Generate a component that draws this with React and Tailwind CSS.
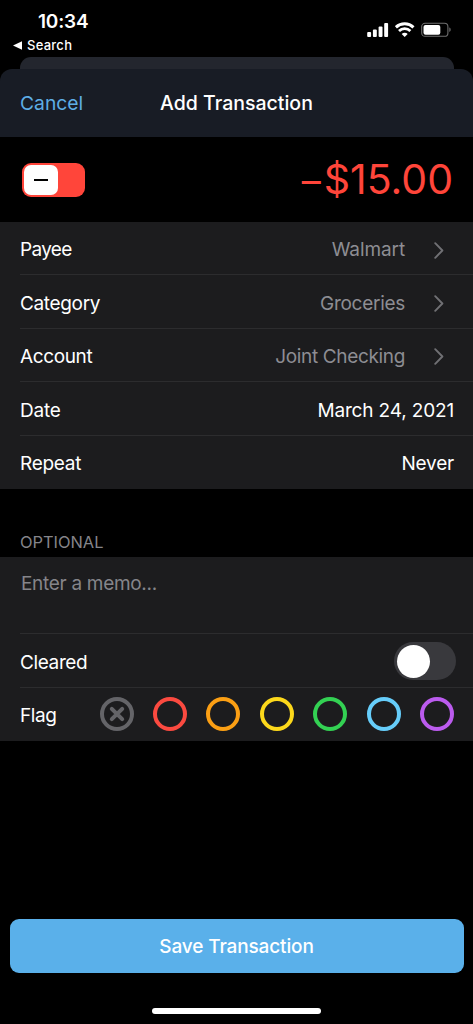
import { useState } from 'react';

const details = [
  { label: 'Payee', value: 'Walmart', link: true, labelClass: 'tracking-[-0.035em]', valueClass: 'tracking-[-0.005em]' },
  { label: 'Category', value: 'Groceries', link: true, labelClass: 'tracking-[-0.018em]', valueClass: 'tracking-[-0.015em]' },
  { label: 'Account', value: 'Joint Checking', link: true, labelClass: 'tracking-[-0.02em]', valueClass: 'tracking-[-0.018em]' },
  { label: 'Date', value: 'March 24, 2021', labelClass: 'tracking-[-0.01em]', valueClass: 'tracking-[-0.008em]' },
  { label: 'Repeat', value: 'Never', labelClass: 'tracking-[-0.015em]', valueClass: 'tracking-[-0.01em]' },
];

const flags = [
  { name: 'Red', border: 'border-[#fb4a40]' },
  { name: 'Orange', border: 'border-[#fb9f14]' },
  { name: 'Yellow', border: 'border-[#fcd81b]' },
  { name: 'Green', border: 'border-[#33d153]' },
  { name: 'Blue', border: 'border-[#66cdfa]' },
  { name: 'Purple', border: 'border-[#bb5bee]' },
];

const StatusBar = () => (
  <div className="flex h-[57px] shrink-0 justify-between">
    <div className="pl-[13px] pt-[11px]">
      <div className="pl-[25px] text-[19px] font-semibold leading-[22px] tracking-[-0.01em]">10:34</div>
      <div className="mt-[4px] flex items-center gap-[5px] text-[13px] font-medium leading-[16px] tracking-[0.02em]">
        <svg width="9" height="9" viewBox="0 0 9 9" fill="currentColor">
          <path d="M0 4.5 9 0.3v8.4z" />
        </svg>
        Search
      </div>
    </div>
    <div className="flex items-start gap-[6px] pr-[21px] pt-[22px]">
      <svg width="22" height="16" viewBox="0 0 22 16" fill="currentColor">
        <rect x="0.2" y="10" width="3.9" height="5" rx="1" />
        <rect x="5.9" y="7.4" width="3.9" height="7.6" rx="1" />
        <rect x="11.6" y="4.4" width="3.9" height="10.6" rx="1" />
        <rect x="17.2" y="1" width="3.9" height="14" rx="1" />
      </svg>
      <svg width="20" height="16" viewBox="0 0 20 16" fill="none" stroke="currentColor">
        <path d="M0.9 5.3a12.9 12.9 0 0 1 17.6 0" strokeWidth="3" />
        <path d="M4 9a8.2 8.2 0 0 1 11.4 0" strokeWidth="2.8" />
        <path d="M9.7 15 6.7 12a4 4 0 0 1 6 0z" fill="currentColor" stroke="none" />
      </svg>
      <svg width="31" height="16" viewBox="0 0 31 16" fill="none">
        <rect x="0.7" y="1.3" width="26.2" height="13" rx="3.4" stroke="#6f6f6f" strokeWidth="1.1" />
        <rect x="2.5" y="3" width="16.8" height="9.7" rx="2" fill="#fff" />
        <path d="M28.4 5.6c1.6.6 1.6 3.8 0 4.4z" fill="#7b7b7b" />
      </svg>
    </div>
  </div>
);

const Row = ({ label, labelClass = 'tracking-[-0.02em]', children, last }) => (
  <div className="flex h-[53.4px] pl-5">
    <div className={`flex flex-1 items-center justify-between pr-[19px] ${last ? 'pb-px' : 'border-b border-[#2c2c2e]'}`}>
      <span className={`text-[19px] ${last ? 'pt-[4px]' : 'pt-[5px]'} ${labelClass}`}>{label}</span>
      {children}
    </div>
  </div>
);

const Chevron = () => (
  <svg className="ml-[29px] mr-[10px]" width="10" height="17" viewBox="0 0 10 17" fill="none" stroke="#707074" strokeWidth="1.9">
    <path d="M1.2 1.2 8.4 8.5 1.2 15.8" strokeLinecap="round" strokeLinejoin="round" />
  </svg>
);

const App = () => {
  const [cleared, setCleared] = useState(false);
  const [expense, setExpense] = useState(true);

  return (
    <div className="flex h-[1024px] w-[473px] flex-col overflow-hidden bg-black font-['Inter',sans-serif] text-white">
      <StatusBar />

      {/* Edge of the screen behind the sheet */}
      <div className="mx-[19.5px] h-3 shrink-0 rounded-t-[11px] bg-[#23262e]" />

      <header className="grid h-[68px] shrink-0 grid-cols-[1fr_auto_1fr] items-center rounded-t-[12px] bg-[#181c25] px-5 pt-[2px]">
        <button className="pb-[2px] text-left text-[19.3px] text-[#5eaee6]">Cancel</button>
        <h1 className="text-[19.5px] font-medium">Add Transaction</h1>
      </header>

      <div className="flex h-[85px] shrink-0 items-center justify-between pl-[22px] pr-5">
        <button
          className={`flex h-[34px] w-[63px] items-center rounded-[9px] p-[2px] ${expense ? 'bg-[#ff453a]' : 'justify-end bg-[#30d158]'}`}
          onClick={() => setExpense(!expense)}
          aria-label="Toggle inflow or outflow"
        >
          <span className="flex h-[30px] w-[34px] items-center justify-center rounded-[7px] bg-white">
            <span className="h-[2px] w-[14px] bg-black" />
          </span>
        </button>
        <span className="flex items-center text-[41px] leading-none text-[#ff453a]">
          <span className="w-[22px] text-[38px]">–</span>
          <span>$15.00</span>
        </span>
      </div>

      <section className="shrink-0 bg-[#1c1c1e]">
        {details.map((item, i) => (
          <Row key={item.label} label={item.label} labelClass={item.labelClass} last={i === details.length - 1}>
            <span className={`flex items-center pt-[4px] ${item.link ? 'text-[#8d8d93]' : ''}`}>
              <span className={`pt-px text-[19px] ${item.valueClass}`}>{item.value}</span>
              {item.link && <Chevron />}
            </span>
          </Row>
        ))}
      </section>

      <h2 className="flex h-[68px] shrink-0 items-end px-5 pb-[5px] text-[16.4px] leading-[20px] text-[#85858a]">OPTIONAL</h2>

      <section className="shrink-0 bg-[#1c1c1e]">
        <div className="h-[77.5px] pl-5">
          <div className="h-full border-b border-[#2c2c2e] pl-px pt-[15px] text-[19px] leading-[24px] tracking-[-0.016em] text-[#85858a]">
            Enter a memo...
          </div>
        </div>
        <Row label="Cleared">
          <button
            role="switch"
            aria-checked={cleared}
            aria-label="Cleared"
            onClick={() => setCleared(!cleared)}
            className={`-mr-[2px] mt-px flex h-[38px] w-[62px] items-center rounded-full p-[2.5px] ${cleared ? 'justify-end bg-[#30d158]' : 'bg-[#39393d]'}`}
          >
            <span className="size-[33px] rounded-full bg-white" />
          </button>
        </Row>
        <Row label="Flag" last>
          <div className="flex w-[354.5px] justify-between">
            <button className="flex size-[34px] items-center justify-center rounded-full border-4 border-[#646468]" aria-label="No flag">
              <svg className="shrink-0" width="18" height="18" viewBox="0 0 18 18" stroke="#646468" strokeWidth="4" strokeLinecap="round">
                <path d="M3.8 3.8l10.4 10.4M14.2 3.8 3.8 14.2" />
              </svg>
            </button>
            {flags.map(flag => (
              <button key={flag.name} className={`size-[34px] rounded-full border-4 ${flag.border}`} aria-label={flag.name} />
            ))}
          </div>
        </Row>
      </section>

      <div className="mt-auto px-[9.5px]">
        <button className="h-[54px] w-full rounded-[9px] bg-[#5ab0ea] pt-[2px] text-[19px] font-medium tracking-[-0.007em]">Save Transaction</button>
      </div>
      <div className="mx-auto mb-[10px] mt-[35px] h-[6px] w-[169px] shrink-0 rounded-full bg-white" />
    </div>
  );
};

export default App;
